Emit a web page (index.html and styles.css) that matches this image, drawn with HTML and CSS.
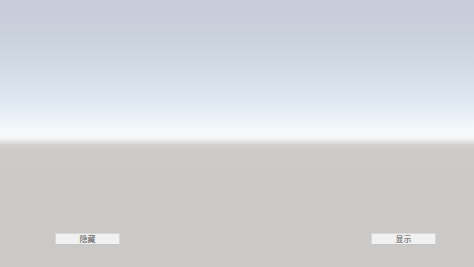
FILE: index.html
```html
<!DOCTYPE html>
<html lang="zh">
<head>
<meta charset="utf-8">
<title>Scene</title>
<link rel="stylesheet" href="styles.css">
</head>
<body>
<div class="scene">
  <div class="controls">
    <button class="btn">隐藏</button>
    <button class="btn">显示</button>
  </div>
</div>
</body>
</html>
```
FILE: styles.css
```css
html, body {
  margin: 0;
  padding: 0;
}
.scene {
  width: 474px;
  height: 267px;
  display: flex;
  flex-direction: column;
  justify-content: flex-end;
  box-sizing: border-box;
  padding-bottom: 22px;
  background: linear-gradient(to bottom,
    #c6ccd9 0px,
    #c9d0dc 30px,
    #d3dbe6 70px,
    #dfe7f0 100px,
    #edf3f9 120px,
    #f6f9fb 132px,
    #f5f6f7 138px,
    #d3d1d0 145px,
    #cdcbc9 152px,
    #cbc9c7 200px,
    #cbc9c7 267px);
}
.controls {
  display: flex;
  justify-content: space-between;
  padding: 0 38px 0 55px;
}
.btn {
  width: 65px;
  height: 12px;
  margin: 0;
  padding: 0;
  border: 1px solid #d8d8d8;
  border-bottom-color: #c4c4c4;
  background: #f1f1f1;
  color: #505050;
  font-family: "Noto Sans CJK SC", sans-serif;
  font-size: 8px;
  line-height: 10px;
  box-sizing: border-box;
  display: flex;
  align-items: center;
  justify-content: center;
}
```
